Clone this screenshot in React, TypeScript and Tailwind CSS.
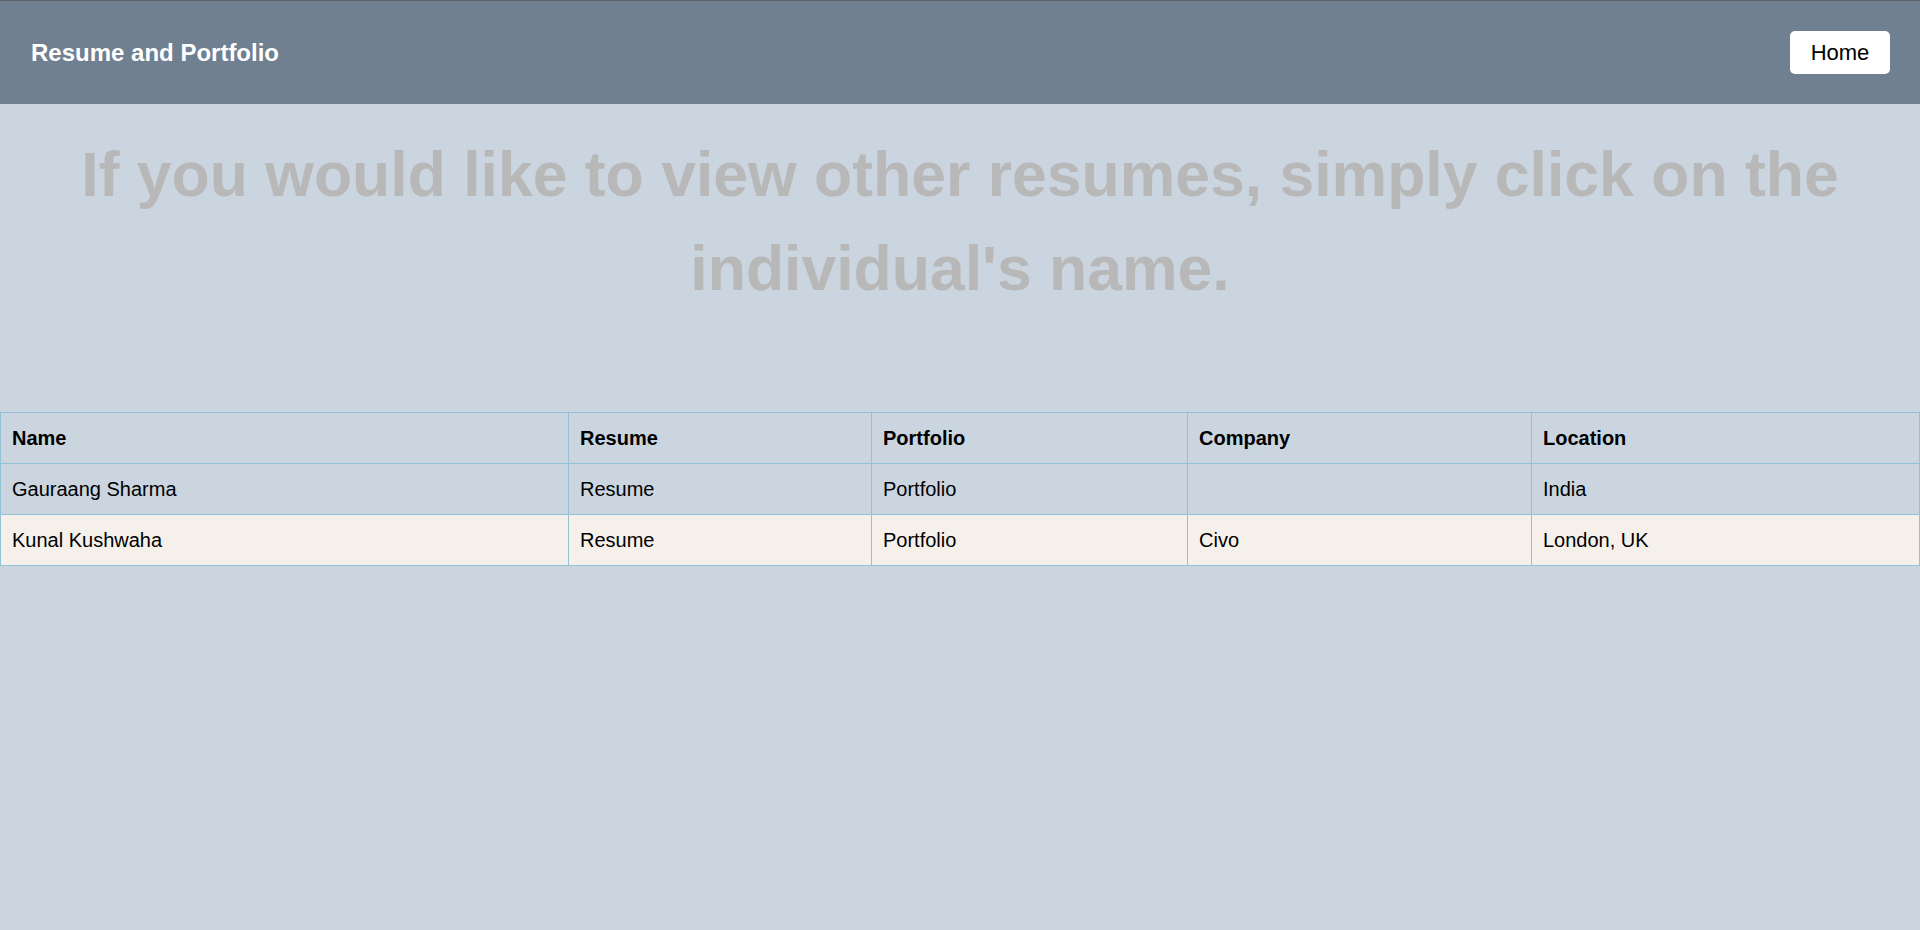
const people = [
  { name: 'Gauraang Sharma', company: '', location: 'India' },
  { name: 'Kunal Kushwaha', company: 'Civo', location: 'London, UK' },
]

export default function App() {
  return (
    <div className="min-h-[930px] bg-[#cad5e0] font-['Liberation_Sans',Arial,sans-serif] text-black">
      <header className="flex h-[104px] items-center justify-between border-t border-[#5a5f66] bg-[#708090] pl-[31px] pr-[30px]">
        <h1 className="text-[24px] font-bold text-white">Resume and Portfolio</h1>
        <a
          href="#"
          className="flex h-[43px] w-[100px] items-center justify-center rounded-[5px] bg-white text-[22px] text-black"
        >
          Home
        </a>
      </header>

      <h2 className="mx-auto mt-[24px] px-[40px] text-center text-[62.5px] font-bold leading-[1.5] text-[#b8b8b8]">
        If you would like to view other resumes, simply click on the individual's name.
      </h2>

      <table className="mt-[96px] w-full table-fixed border-collapse text-left text-[20px]">
        <colgroup>
          <col className="w-[568px]" />
          <col className="w-[303px]" />
          <col className="w-[316px]" />
          <col className="w-[344px]" />
          <col />
        </colgroup>
        <thead>
          <tr className="h-[51px]">
            {['Name', 'Resume', 'Portfolio', 'Company', 'Location'].map((h) => (
              <th key={h} className="border border-[#93c1d5] pl-[11px] font-bold">
                {h}
              </th>
            ))}
          </tr>
        </thead>
        <tbody>
          {people.map((p, i) => (
            <tr key={p.name} className={i % 2 === 1 ? 'h-[51px] bg-[#f5f1ea]' : 'h-[51px]'}>
              <td className="border border-[#93c1d5] pl-[11px]">{p.name}</td>
              <td className="border border-[#93c1d5] pl-[11px]">Resume</td>
              <td className="border border-[#93c1d5] pl-[11px]">Portfolio</td>
              <td className="border border-[#93c1d5] pl-[11px]">{p.company}</td>
              <td className="border border-[#93c1d5] pl-[11px]">{p.location}</td>
            </tr>
          ))}
        </tbody>
      </table>
    </div>
  )
}
